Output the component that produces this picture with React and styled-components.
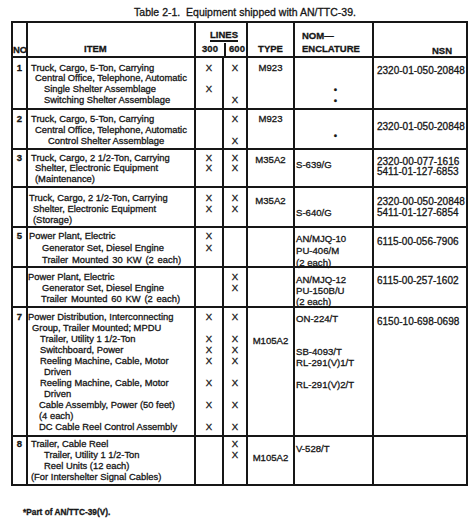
import React from 'react';
import styled, { createGlobalStyle } from 'styled-components';

const GlobalStyle = createGlobalStyle`
  html, body {
    margin: 0;
    padding: 0;
    background: #fff;
  }
`;

const Page = styled.div`
  width: 474px;
  height: 520px;
  box-sizing: border-box;
  padding-top: 5px;
  background: #fff;
  color: #161616;
  font-family: "Liberation Sans", Arial, sans-serif;
  -webkit-text-stroke: 0.3px #161616;
`;

const Title = styled.div`
  height: 16px;
  padding-left: 16px;
  text-align: center;
  font-size: 10.5px;
  line-height: 14px;
`;

const Table = styled.div`
  margin-left: 11px;
  width: 457px;
  box-sizing: border-box;
  border: 2px solid #161616;
  display: flex;
  flex-direction: column;
`;

const Row = styled.div`
  --pad: ${p => p.$pad || 0}px;
  --lh: ${p => p.$lh || 11}px;
  display: grid;
  grid-template-columns: 13px 168px 28px 24px 47px 79px 94px;
  height: ${p => p.$h}px;
  box-sizing: border-box;
  border-bottom: ${p => (p.$last ? 'none' : '2px solid #161616')};
`;

const Cell = styled.div`
  box-sizing: border-box;
  border-left: ${p => (p.$first ? 'none' : '2px solid #161616')};
  padding-top: calc(var(--pad) + ${p => p.$dy || 0}px);
  padding-left: ${p => p.$pl || 0}px;
  text-align: ${p => p.$align || 'left'};
  font-size: ${p => p.$fs || 9.4}px;
  font-weight: ${p => (p.$bold ? 'bold' : 'normal')};
  white-space: nowrap;
`;

const Line = styled.div`
  height: var(--lh);
  line-height: var(--lh);
  margin-left: ${p => p.$indent || 0}px;
  word-spacing: ${p => p.$ws || 0}px;
`;

const HeadCell = styled.div`
  box-sizing: border-box;
  border-left: ${p => (p.$first ? 'none' : '2px solid #161616')};
  display: flex;
  flex-direction: column;
  justify-content: flex-end;
  align-items: ${p => (p.$center ? 'center' : 'flex-start')};
  padding-left: ${p => p.$pl || 0}px;
  padding-bottom: ${p => p.$pb ?? 2}px;
  font-size: 9.5px;
  font-weight: bold;
  line-height: 10px;
  white-space: nowrap;
`;

const HeadWord = styled.div`
  margin-bottom: ${p => p.$gap || 0}px;
`;

const LinesHead = styled.div`
  grid-column: span 2;
  border-left: 2px solid #161616;
  display: flex;
  flex-direction: column;
  font-size: 9.5px;
  font-weight: bold;
  line-height: 10px;
`;

const LinesLabel = styled.div`
  padding-top: 7px;
  padding-left: 6px;
  text-align: center;
  text-decoration: underline;
  text-decoration-thickness: 2px;
  text-underline-offset: 2px;
`;

const LinesSub = styled.div`
  flex: 1;
  display: grid;
  grid-template-columns: 28px 24px;
  margin-top: 3px;
`;

const SubCell = styled.div`
  display: flex;
  align-items: flex-end;
  justify-content: center;
  padding-bottom: 2px;
  border-left: ${p => (p.$divider ? '2px solid #161616' : 'none')};
`;

const Footnote = styled.div`
  margin-top: 21px;
  padding-left: 23px;
  font-size: 8.3px;
  font-weight: bold;
  line-height: 10px;
`;

// each row: height, first-line offset, line height, and the lines in every column
const rows = [
  {
    no: '1', h: 52, pad: 4.5, lh: 10.8,
    item: [['Truck, Cargo, 5-Ton, Carrying', 0], ['Central Office, Telephone, Automatic', 4], ['Single Shelter Assemblage', 13], ['Switching Shelter Assemblage', 13]],
    l300: ['X', '', 'X', ''], l600: ['X', '', '', 'X'],
    type: { lines: ['M923'], dy: 0 },
    nom: { lines: ['', '', '•', '•'], dy: 1, center: true },
    nsn: { lines: ['2320-01-050-20848'], dy: 3 },
  },
  {
    no: '2', h: 40, pad: 2.5, lh: 11,
    item: [['Truck, Cargo, 5-Ton, Carrying', 0], ['Central Office, Telephone, Automatic', 4], ['Control Shelter Assemblage', 17]],
    l300: [], l600: ['X', '', 'X'],
    type: { lines: ['M923'], dy: 0 },
    nom: { lines: ['', '•'], dy: 6, center: true },
    nsn: { lines: ['2320-01-050-20848'], dy: 8 },
  },
  {
    no: '3', h: 38, pad: 2.8, lh: 10.4,
    item: [['Truck, Cargo, 2 1/2-Ton, Carrying', 0], ['Shelter, Electronic Equipment', 4], ['(Maintenance)', 4]],
    l300: ['X', 'X'], l600: ['X', 'X'],
    type: { lines: ['M35A2'], dy: 2 },
    nom: { lines: ['S-639/G'], dy: 7 },
    nsn: { lines: ['2320-00-077-1616', '5411-01-127-6853'], dy: 4 },
  },
  {
    no: '', h: 40, pad: 3.5, lh: 11,
    item: [['Truck, Cargo, 2 1/2-Ton, Carrying', -2], ['Shelter, Electronic Equipment', 2], ['(Storage)', 2]],
    l300: ['X', 'X'], l600: ['X', 'X'],
    type: { lines: ['M35A2'], dy: 3 },
    nom: { lines: ['', 'S-640/G'], dy: 4 },
    nsn: { lines: ['2320-00-050-20848', '5411-01-127-6854'], dy: 4 },
  },
  {
    no: '5', h: 40, pad: 1.8, lh: 12,
    item: [['Power Plant, Electric', -2], ['Generator Set, Diesel Engine', 11], ['Trailer Mounted 30 KW (2 each)', 11, 1.2]],
    l300: ['X', 'X'], l600: [],
    type: { lines: [] },
    nom: { lines: ['AN/MJQ-10', 'PU-406/M', '(2 each)'], dy: 3 },
    nsn: { lines: ['6115-00-056-7906'], dy: 6 },
  },
  {
    no: '', h: 40, pad: 2.5, lh: 11,
    item: [['Power Plant, Electric', -3], ['Generator Set, Diesel Engine', 11], ['Trailer Mounted 60 KW (2 each)', 10, 1.2]],
    l300: [], l600: ['X', 'X'],
    type: { lines: [] },
    nom: { lines: ['AN/MJQ-12', 'PU-150B/U', '(2 each)'], dy: 3 },
    nsn: { lines: ['6115-00-257-1602'], dy: 4 },
  },
  {
    no: '7', h: 129, pad: 2.5, lh: 11,
    item: [
      ['Power Distribution, Interconnecting', -3],
      ['Group, Trailer Mounted; MPDU', 1],
      ['Trailer, Utility 1 1/2-Ton', 9],
      ['Switchboard, Power', 9],
      ['Reeling Machine, Cable, Motor', 9],
      ['Driven', 13],
      ['Reeling Machine, Cable, Motor', 9],
      ['Driven', 13],
      ['Cable Assembly, Power (50 feet)', 8],
      ['(4 each)', 8],
      ['DC Cable Reel Control Assembly', 8],
    ],
    l300: ['X', '', 'X', 'X', 'X', '', 'X', '', 'X', '', 'X'],
    l600: ['X', '', 'X', 'X', 'X', '', 'X', '', 'X', '', 'X'],
    type: { lines: ['', '', 'M105A2'], dy: 2 },
    nom: { lines: ['ON-224/T', '', '', 'SB-4093/T', 'RL-291(V)1/T', '', 'RL-291(V)2/T'], dy: 2 },
    nsn: { lines: ['6150-10-698-0698'], dy: 5 },
  },
  {
    no: '8', h: 47, pad: 0.5, lh: 11.3, last: true,
    item: [['Trailer, Cable Reel', 0], ['Trailer, Utility 1 1/2-Ton', 13], ['Reel Units (12 each)', 13], ['(For Intershelter Signal Cables)', 0]],
    l300: [], l600: ['X', 'X'],
    type: { lines: ['', 'M105A2'], dy: 3 },
    nom: { lines: ['V-528/T'], dy: 5 },
    nsn: { lines: [] },
  },
];

const TextLines = ({ lines }) =>
  lines.map((t, i) => <Line key={i}>{t}</Line>);

const DataRow = ({ row }) => (
  <Row $h={row.h} $pad={row.pad} $lh={row.lh} $last={row.last}>
    <Cell $first $align="center" $fs={9.5} $bold>
      <Line>{row.no}</Line>
    </Cell>
    <Cell $pl={3}>
      {row.item.map(([t, indent, ws], i) => (
        <Line key={i} $indent={indent} $ws={ws}>{t}</Line>
      ))}
    </Cell>
    <Cell $align="center" $fs={9.5}>
      <TextLines lines={row.l300} />
    </Cell>
    <Cell $align="center" $fs={9.5}>
      <TextLines lines={row.l600} />
    </Cell>
    <Cell $align="center" $fs={9.6} $dy={row.type.dy}>
      <TextLines lines={row.type.lines} />
    </Cell>
    <Cell $align={row.nom.center ? 'center' : 'left'} $pl={row.nom.center ? 4 : 1} $fs={9.6} $dy={row.nom.dy}>
      <TextLines lines={row.nom.lines} />
    </Cell>
    <Cell $pl={3} $fs={10} $dy={row.nsn.dy}>
      <TextLines lines={row.nsn.lines} />
    </Cell>
  </Row>
);

export default function App() {
  return (
    <Page>
      <GlobalStyle />
      <Title>Table 2-1.&nbsp; Equipment shipped with AN/TTC-39.</Title>
      <Table>
        <Row $h={35}>
          <HeadCell $first $pb={1}>NO</HeadCell>
          <HeadCell $pl={56}>ITEM</HeadCell>
          <LinesHead>
            <LinesLabel>LINES</LinesLabel>
            <LinesSub>
              <SubCell>300</SubCell>
              <SubCell $divider>600</SubCell>
            </LinesSub>
          </LinesHead>
          <HeadCell $center>TYPE</HeadCell>
          <HeadCell $pl={7}>
            <HeadWord $gap={3}>NOM—</HeadWord>
            <HeadWord>ENCLATURE</HeadWord>
          </HeadCell>
          <HeadCell $pl={58} $pb={0}>NSN</HeadCell>
        </Row>
        {rows.map((row, i) => (
          <DataRow key={i} row={row} />
        ))}
      </Table>
      <Footnote>*Part of AN/TTC-39(V).</Footnote>
    </Page>
  );
}
